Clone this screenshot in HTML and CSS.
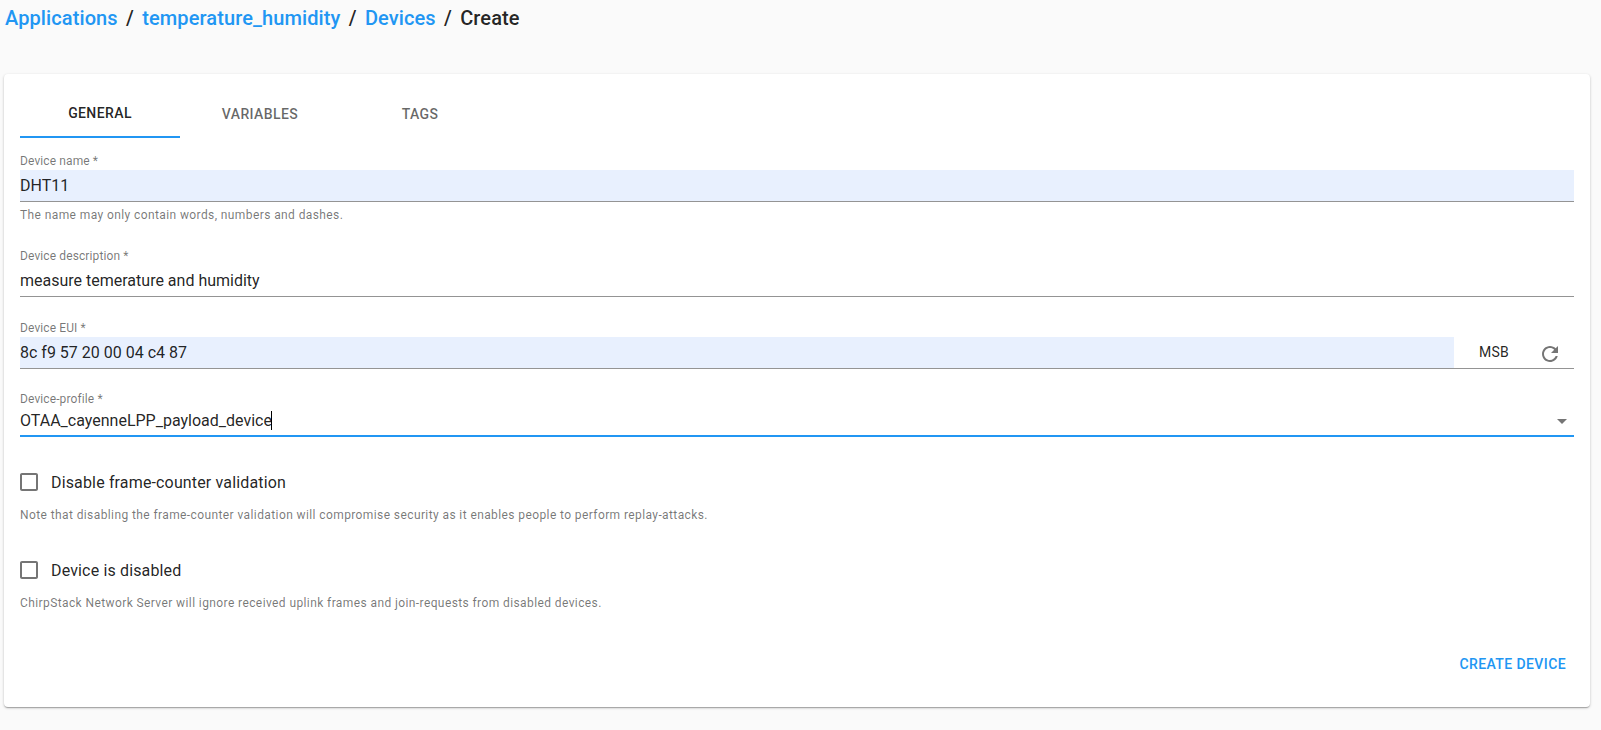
FILE: index.html
```html
<!DOCTYPE html>
<html lang="en">
<head>
<meta charset="utf-8">
<title>Create device</title>
<link rel="stylesheet" href="styles.css">
</head>
<body>
<nav class="crumbs">
  <a class="crumb-link">Applications</a><span class="sep">/</span>
  <a class="crumb-link">temperature_humidity</a><span class="sep">/</span>
  <a class="crumb-link">Devices</a><span class="sep">/</span>
  <span class="crumb-current">Create</span>
</nav>
<main class="card">
  <div class="tabs">
    <div class="tab tab-active">GENERAL</div>
    <div class="tab">VARIABLES</div>
    <div class="tab">TAGS</div>
  </div>
  <div class="field field-first">
    <div class="label">Device name *</div>
    <div class="input autofill">DHT11</div>
    <div class="help">The name may only contain words, numbers and dashes.</div>
  </div>
  <div class="field field-desc">
    <div class="label">Device description *</div>
    <div class="input">measure temerature and humidity</div>
  </div>
  <div class="field field-eui">
    <div class="label">Device EUI *</div>
    <div class="input eui-row">
      <div class="autofill eui-value">8c f9 57 20 00 04 c4 87</div>
      <div class="msb">MSB</div>
      <svg class="refresh" viewBox="0 0 24 24" aria-hidden="true"><path d="M17.65 6.35C16.2 4.9 14.21 4 12 4c-4.42 0-7.99 3.58-7.99 8s3.57 8 7.99 8c3.73 0 6.84-2.55 7.73-6h-2.08c-.82 2.33-3.04 4-5.65 4-3.31 0-6-2.69-6-6s2.69-6 6-6c1.66 0 3.14.69 4.22 1.78L13 11h7V4l-2.35 2.35z"/></svg>
    </div>
  </div>
  <div class="field field-profile">
    <div class="label">Device-profile *</div>
    <div class="input input-focus">
      <span class="select-value">OTAA_cayenneLPP_payload_device</span><span class="caret"></span>
      <svg class="arrow" viewBox="0 0 24 24" aria-hidden="true"><path d="M7 10l5 5 5-5z"/></svg>
    </div>
  </div>
  <label class="check check-first">
    <svg class="box" viewBox="0 0 24 24" aria-hidden="true"><path d="M19 5v14H5V5h14m0-2H5c-1.1 0-2 .9-2 2v14c0 1.1.9 2 2 2h14c1.1 0 2-.9 2-2V5c0-1.1-.9-2-2-2z"/></svg>
    <span>Disable frame-counter validation</span>
  </label>
  <div class="help help-check">Note that disabling the frame-counter validation will compromise security as it enables people to perform replay-attacks.</div>
  <label class="check check-second">
    <svg class="box" viewBox="0 0 24 24" aria-hidden="true"><path d="M19 5v14H5V5h14m0-2H5c-1.1 0-2 .9-2 2v14c0 1.1.9 2 2 2h14c1.1 0 2-.9 2-2V5c0-1.1-.9-2-2-2z"/></svg>
    <span>Device is disabled</span>
  </label>
  <div class="help help-check">ChirpStack Network Server will ignore received uplink frames and join-requests from disabled devices.</div>
  <div class="actions"><span class="submit">CREATE DEVICE</span></div>
</main>
</body>
</html>
```
FILE: styles.css
```css
* { box-sizing: border-box; }
html, body { height: 100%; }
body {
  margin: 0;
  background: #fafafa;
  font-family: Roboto, "Liberation Sans", sans-serif;
  color: rgba(0, 0, 0, 0.87);
  overflow: hidden;
}
.crumbs {
  display: flex;
  align-items: center;
  height: 37px;
  padding-left: 5px;
  font-size: 20px;
  font-weight: 500;
  line-height: 37px;
  letter-spacing: 0.1px;
}
.crumb-link { color: #2196f3; }
.crumb-current { color: rgba(0, 0, 0, 0.87); }
.sep { margin: 0 8.3px; color: rgba(0, 0, 0, 0.87); }
.card {
  margin: 37px 11px 0 4px;
  height: 633px;
  padding: 0 16px;
  background: #fff;
  border-radius: 4px;
  box-shadow: 0 1px 3px 0 rgba(0,0,0,.2), 0 1px 1px 0 rgba(0,0,0,.14), 0 2px 1px -1px rgba(0,0,0,.12);
}
.tabs { display: flex; height: 64px; padding-top: 16px; }
.tab {
  width: 160px;
  height: 48px;
  display: flex;
  align-items: center;
  justify-content: center;
  font-size: 14px;
  font-weight: 500;
  letter-spacing: 0.4px;
  color: rgba(0, 0, 0, 0.6);
}
.tab-active { color: rgba(0, 0, 0, 0.87); border-bottom: 2px solid #2196f3; }
.field-first { margin-top: 16px; }
.field-desc { margin-top: 27px; }
.field-eui { margin-top: 24px; }
.field-profile { margin-top: 23px; }
.label {
  height: 14px;
  font-size: 12px;
  line-height: 14px;
  letter-spacing: 0.11px;
  color: rgba(0, 0, 0, 0.54);
}
.input {
  position: relative;
  height: 32px;
  line-height: 31px;
  font-size: 16px;
  border-bottom: 1px solid #949494;
  margin-top: 2px;
  display: block;
}
.autofill { background: #e8f0fe; }
.eui-row { display: flex; align-items: stretch; background: none; }
.eui-value { width: 1434px; }
.msb { width: 66px; margin-left: 7px; text-align: center; font-size: 14px; font-weight: 400; letter-spacing: 0.3px; }
.refresh { width: 24px; height: 24px; margin: 5px 0 0 11px; fill: #757575; }
.input-focus { border-bottom: 2px solid #2196f3; height: 29px; line-height: 25px; }
.select-value { vertical-align: top; }
.caret { display: inline-block; width: 1px; height: 19px; margin: 3px 0 0 -1px; background: #000; vertical-align: top; }
.arrow { position: absolute; right: 0; top: 1px; width: 24px; height: 24px; fill: #757575; }
.help {
  margin-top: 6px;
  font-size: 12px;
  line-height: 14px;
  letter-spacing: 0.4px;
  color: rgba(0, 0, 0, 0.54);
}
.check {
  display: flex;
  align-items: center;
  height: 24px;
  margin-left: -3px;
  font-size: 16px;
  letter-spacing: 0.15px;
  color: rgba(0, 0, 0, 0.87);
}
.check-first { margin-top: 33px; }
.check-second { margin-top: 36px; }
.box { width: 24px; height: 24px; fill: #757575; margin-right: 10px; }
.help-check { margin-top: 14px; }
.actions { display: flex; justify-content: flex-end; margin-top: 46px; padding-right: 8px; }
.submit {
  font-size: 14px;
  font-weight: 500;
  letter-spacing: 0.4px;
  line-height: 16px;
  color: #2196f3;
}
```
